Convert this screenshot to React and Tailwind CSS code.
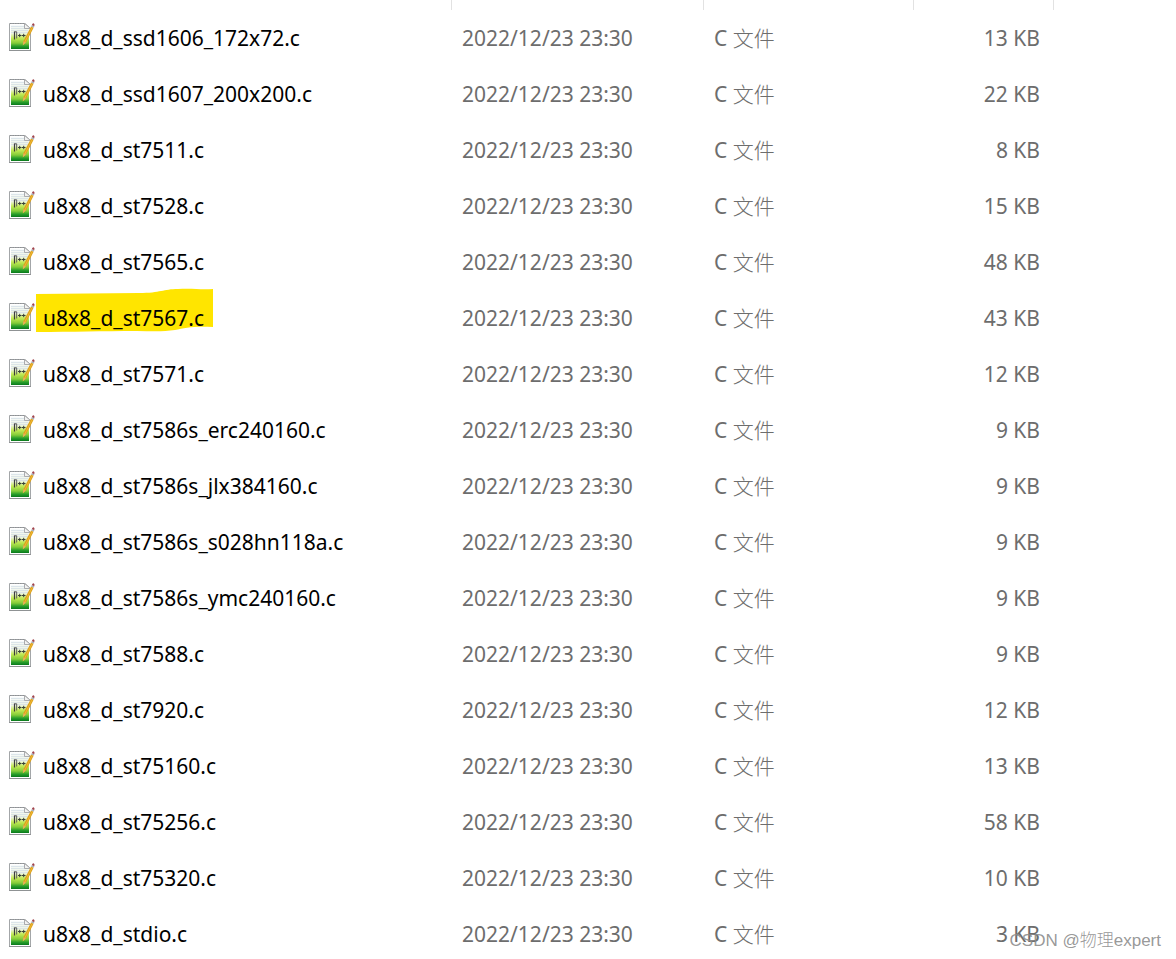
const files = [
  ["u8x8_d_ssd1606_172x72.c", 13],
  ["u8x8_d_ssd1607_200x200.c", 22],
  ["u8x8_d_st7511.c", 8],
  ["u8x8_d_st7528.c", 15],
  ["u8x8_d_st7565.c", 48],
  ["u8x8_d_st7567.c", 43, true],
  ["u8x8_d_st7571.c", 12],
  ["u8x8_d_st7586s_erc240160.c", 9],
  ["u8x8_d_st7586s_jlx384160.c", 9],
  ["u8x8_d_st7586s_s028hn118a.c", 9],
  ["u8x8_d_st7586s_ymc240160.c", 9],
  ["u8x8_d_st7588.c", 9],
  ["u8x8_d_st7920.c", 12],
  ["u8x8_d_st75160.c", 13],
  ["u8x8_d_st75256.c", 58],
  ["u8x8_d_st75320.c", 10],
  ["u8x8_d_stdio.c", 3],
];

function FileIcon() {
  return (
    <svg width="27" height="30" viewBox="0 1 27 30" className="relative shrink-0" aria-hidden="true">
      <path d="M1.5 1.5H17L22.5 6.5V28.5H1.5Z" fill="#fff" stroke="#a3a6a8" />
      <path d="M1 28.5H23" stroke="#8f9294" />
      <path d="M3 3H16.5L21 7V27H3Z" fill="url(#pageGreen)" />
      <path d="M3 4.5H16M3 6.5H17M3 8.5H20M3 10.5H20" stroke="#d5dfe6" strokeWidth="0.8" />
      <path d="M2 1.5H17" stroke="#8d9094" strokeDasharray="1.5 1" />
      <path d="M16.5 1.5V6.5H22.5Z" fill="#f2f2f2" stroke="#a1a3a5" strokeWidth="0.9" />
      <path d="M6.5 17.5V9.5" stroke="#3c3c3c" strokeWidth="1.2" />
      <path d="M6.5 9.8H8.7V16.5" fill="none" stroke="#5d5d5d" strokeWidth="1" />
      <path d="M10 13.5H13.5M11.7 11.8V15.2M14 13.5H17.5M15.7 11.8V15.2" stroke="#3b4038" strokeWidth="1" />
      <path d="M14.8 23.2L15.4 19.3L23 4.5L25.6 5.8L18 20.6Z" fill="#dda01c" />
      <path d="M16.8 20L24.4 5.2" stroke="#f4bf3c" strokeWidth="0.8" />
      <path d="M14.8 23.2L15.4 19.3L18 20.6Z" fill="#e3b25c" />
      <path d="M23 4.5L23.9 2.9L26.3 4.2L25.6 5.8Z" fill="#a9b1bc" />
      <path d="M23.9 2.9Q24.4 1.2 25.6 1.3Q27 1.8 26.3 4.2Z" fill="#a1424a" />
    </svg>
  );
}

function Highlight() {
  return (
    <svg
      width="178"
      height="45"
      viewBox="0 0 178 45"
      className="absolute -top-0.5 left-9"
      aria-hidden="true"
    >
      <path d="M0 6C35 6 68 5 103 5C125 5 127 1 142 1C157 0 164 2 177 1V39C157 38 149 40 139 42C126 44 114 43 101 43C65 43 38 44 0 44Z" fill="#ffe500" />
    </svg>
  );
}

export default function App() {
  return (
    <main className="relative h-screen overflow-hidden bg-white font-['Noto_Sans','Noto_Sans_CJK_SC',sans-serif] text-[21px] leading-7 text-[#6d6d6d]">
      <svg width="0" height="0" className="absolute" aria-hidden="true">
        <defs>
          <linearGradient id="pageGreen" x1="0" y1="0" x2="0" y2="1">
            <stop offset="0" stopColor="#f7fafc" />
            <stop offset="0.35" stopColor="#edf4e0" />
            <stop offset="0.55" stopColor="#c3ea55" />
            <stop offset="0.75" stopColor="#84cc3a" />
            <stop offset="0.88" stopColor="#2a9f2b" />
            <stop offset="1" stopColor="#08791c" />
          </linearGradient>
        </defs>
      </svg>
      <table className="w-full table-fixed border-separate border-spacing-0">
        <colgroup>
          <col className="w-[452px]" />
          <col className="w-[252px]" />
          <col className="w-[210px]" />
          <col className="w-[140px]" />
          <col />
        </colgroup>
        <thead>
          <tr className="h-[10px]">
            <td className="border-r border-[#e2e2e2] p-0" />
            <td className="border-r border-[#e2e2e2] p-0" />
            <td className="border-r border-[#e2e2e2] p-0" />
            <td className="border-r border-[#e2e2e2] p-0" />
            <td className="p-0" />
          </tr>
        </thead>
        <tbody>
          {files.map(([name, size, marked]) => (
            <tr key={name} className="h-14">
              <td className="p-0">
                <div className="relative flex h-14 items-center gap-2 pl-2 text-black">
                  {marked && <Highlight />}
                  <FileIcon />
                  <span className="relative whitespace-nowrap">{name}</span>
                </div>
              </td>
              <td className="p-0 pl-[10px]">2022/12/23 23:30</td>
              <td className="p-0 pl-[10px]">
                C <span className="font-light">文件</span>
              </td>
              <td className="p-0 pr-[14px] text-right">{size} KB</td>
              <td className="p-0" />
            </tr>
          ))}
        </tbody>
      </table>
      <div className="absolute right-[15px] bottom-1.5 font-['Liberation_Sans','Noto_Sans_CJK_SC',sans-serif] text-[17px] leading-6 font-light text-[#8c8c8c]/90">
        CSDN @物理expert
      </div>
    </main>
  );
}
